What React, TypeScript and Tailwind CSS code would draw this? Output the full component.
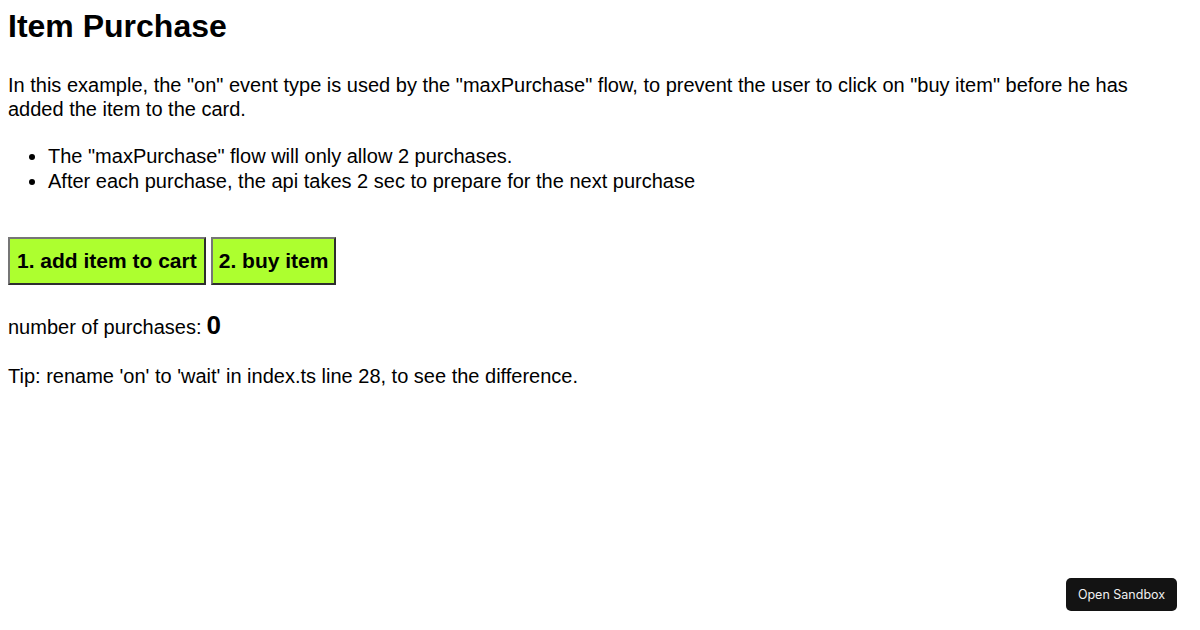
export default function App() {
  return (
    <div className="min-h-[630px] bg-white py-2 pl-2 pr-[24px] text-black font-['Liberation_Sans',Arial,sans-serif] text-[20px] leading-[24px]">
      <h1 className="text-[32px] font-bold leading-[38px] mt-[-1px] mb-[28px]">Item Purchase</h1>
      <p className="mb-[23px]">
        In this example, the "on" event type is used by the "maxPurchase" flow, to prevent the user to click on "buy item" before he has
        added the item to the card.
      </p>
      <ul className="list-disc pl-10 mb-[43px] leading-[25px]">
        <li>The "maxPurchase" flow will only allow 2 purchases.</li>
        <li>After each purchase, the api takes 2 sec to prepare for the next purchase</li>
      </ul>
      <div className="flex gap-[5px]">
        <button className="bg-[#adff2f] border-2 border-t-[#767676] border-l-[#767676] border-b-[#2e2e2e] border-r-[#2e2e2e] px-[7px] py-[10px] text-[21px] font-bold leading-[24px]">
          1. add item to cart
        </button>
        <button className="bg-[#adff2f] border-2 border-t-[#767676] border-l-[#767676] border-b-[#2e2e2e] border-r-[#2e2e2e] px-[6px] py-[10px] text-[21px] font-bold leading-[24px]">
          2. buy item
        </button>
      </div>
      <p className="mt-[28px] flex items-baseline gap-[5px]">
        <span>number of purchases:</span>
        <span className="text-[26px] font-bold">0</span>
      </p>
      <p className="mt-[25px]">Tip: rename 'on' to 'wait' in index.ts line 28, to see the difference.</p>

      <button className="fixed right-[23px] bottom-[19px] bg-[#131313] text-[#f0f0f0] rounded-[5px] h-[33px] w-[111px] whitespace-nowrap text-[12.5px] font-['Inter',sans-serif]">
        Open Sandbox
      </button>
    </div>
  );
}
